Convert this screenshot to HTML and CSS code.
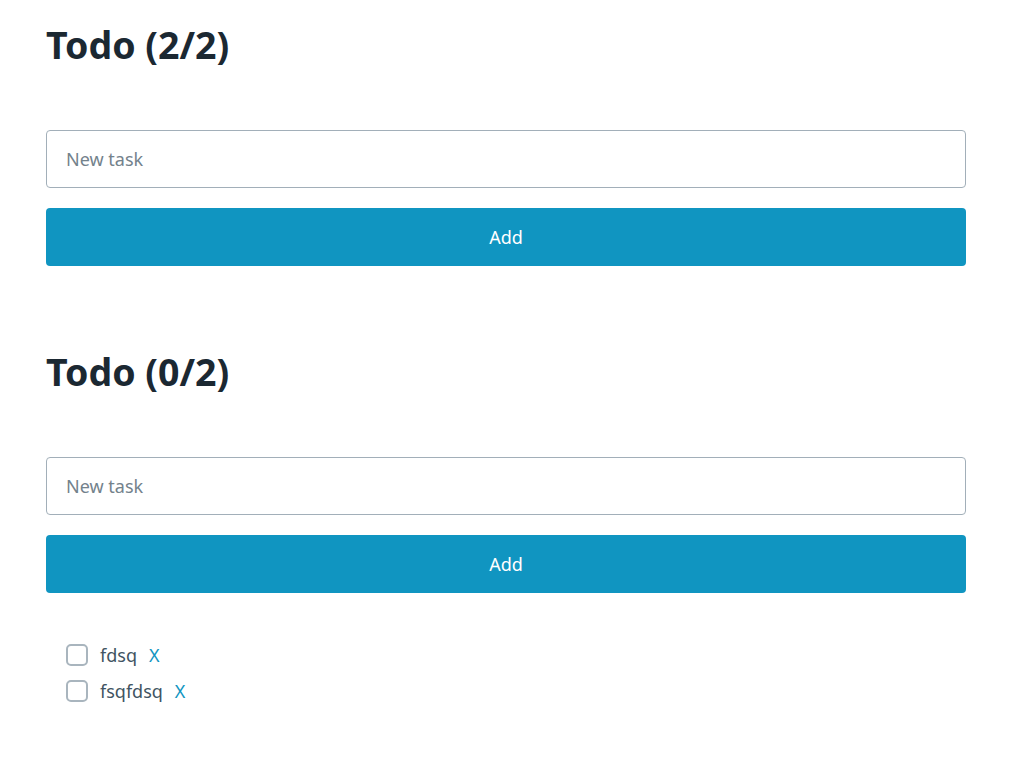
FILE: index.html
```html
<!DOCTYPE html>
<html lang="en">

<head>
    <meta charset="UTF-8">
    <meta name="viewport" content="width=device-width, initial-scale=1.0">
    <title>Todo</title>
    <link rel="stylesheet" href="styles.css">
</head>

<body>
    <main class="container">
        <!-- First list -->
        <section class="todo">
            <h1>Todo (2/2)</h1>
            <form class="todo-form">
                <input type="text" placeholder="New task">
                <button type="button">Add</button>
            </form>
        </section>

        <!-- Second list -->
        <section class="todo">
            <h1>Todo (0/2)</h1>
            <form class="todo-form">
                <input type="text" placeholder="New task">
                <button type="button">Add</button>
            </form>
            <ul class="tasks">
                <li><label><input type="checkbox"><span>fdsq</span></label><a href="#">X</a></li>
                <li><label><input type="checkbox"><span>fsqfdsq</span></label><a href="#">X</a></li>
            </ul>
        </section>
    </main>
</body>

</html>
```

FILE: styles.css
```css
body {
    margin: 0;
    background-color: #fff;
    font-family: "Noto Sans", "Open Sans", sans-serif;
    color: #415462;
}

.container {
    width: 920px;
    padding: 25px 46px 0;
}

.todo + .todo {
    margin-top: 86px;
}

.todo h1 {
    margin: 0 0 65px;
    font-size: 37.5px;
    line-height: 40px;
    font-weight: 700;
    color: #1b2832;
}

.todo-form {
    display: flex;
    flex-direction: column;
    gap: 20px;
}

.todo-form input {
    box-sizing: border-box;
    height: 58px;
    padding: 0 19px;
    border: 1px solid #a2afb9;
    border-radius: 4px;
    font-family: inherit;
    font-size: 18px;
    color: #415462;
}

.todo-form input::placeholder {
    color: #73828c;
}

.todo-form button {
    height: 58px;
    border: none;
    border-radius: 4px;
    background-color: #1095c1;
    color: #fff;
    font-family: inherit;
    font-size: 18px;
}

.tasks {
    list-style: none;
    margin: 44px 0 0;
    padding: 0 0 0 20px;
}

.tasks li {
    display: flex;
    align-items: center;
    height: 36px;
    font-size: 18px;
}

.tasks label {
    display: flex;
    align-items: center;
}

.tasks input[type="checkbox"] {
    appearance: none;
    box-sizing: border-box;
    width: 22px;
    height: 22px;
    margin: 0 12px 0 0;
    border: 2px solid #a9b5be;
    border-radius: 5px;
}

.tasks a {
    margin-left: 12px;
    color: #1095c1;
    text-decoration: none;
}
```
